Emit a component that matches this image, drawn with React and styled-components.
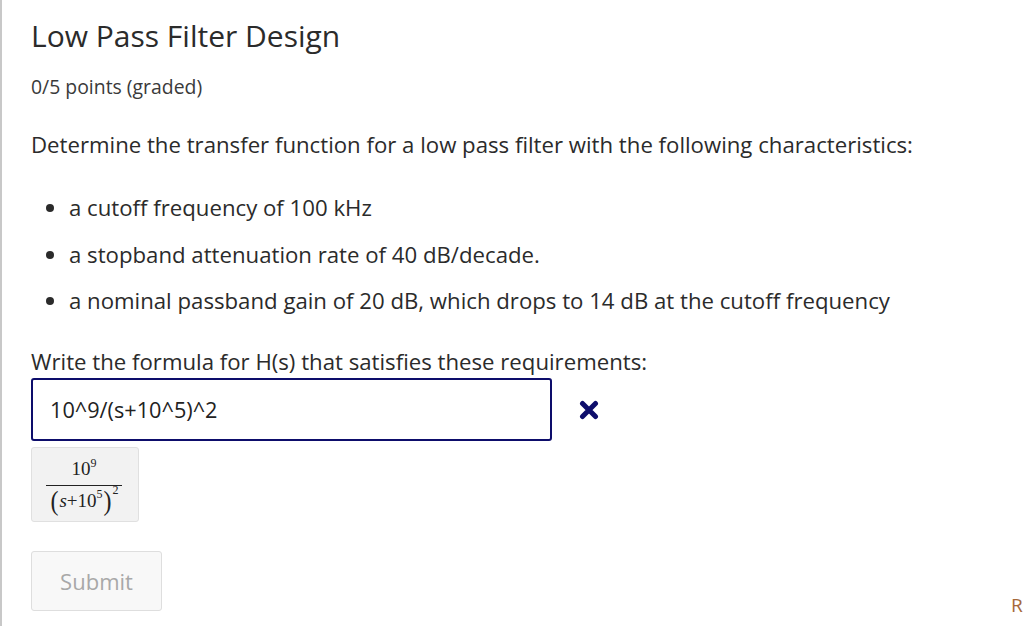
import React from "react";
import styled, { createGlobalStyle } from "styled-components";

const Global = createGlobalStyle`
  html, body { margin: 0; padding: 0; background: #fff; }
  body { font-family: "Open Sans", "Noto Sans", sans-serif; color: #2b2b2b; overflow: hidden; }
`;

const Page = styled.div`
  width: 1024px;
  height: 626px;
  position: relative;
  overflow: hidden;
  box-sizing: border-box;
  border-left: 2px solid #c8c8c8;
  padding: 13px 0 0 29px;
`;

const Title = styled.h2`
  margin: 0;
  font-size: 30px;
  font-weight: 400;
  line-height: 46px;
  color: #2b2b2b;
`;

const Points = styled.div`
  margin-top: 17px;
  font-size: 19.4px;
  line-height: 22px;
  color: #3a3a3a;
`;

const Para = styled.p`
  margin: ${(p) => p.$top || 0}px 0 0;
  font-size: 22.2px;
  line-height: 28px;
  color: #2b2b2b;
`;

const List = styled.ul`
  margin: 35px 0 0;
  padding: 0 0 0 38px;
  display: flex;
  flex-direction: column;
  gap: 18.5px;
  font-size: 22.2px;
  line-height: 28px;
`;

const Item = styled.li`
  padding-left: 0;
`;

const AnswerRow = styled.div`
  display: flex;
  align-items: center;
  margin-top: 2px;
`;

const Input = styled.div`
  width: 521px;
  height: 63px;
  box-sizing: border-box;
  border: 2px solid #0d0d6b;
  border-radius: 3px;
  padding: 0 17px;
  display: flex;
  align-items: center;
  font-size: 21.7px;
  color: #222;
`;

const Cross = styled.span`
  margin-left: 27px;
  margin-top: 1px;
  display: flex;
`;

const Preview = styled.div`
  margin-top: 6px;
  width: 108px;
  height: 75px;
  box-sizing: border-box;
  background: #f2f2f2;
  border: 1px solid #e0e0e0;
  border-radius: 3px;
  display: flex;
  align-items: center;
  justify-content: center;
  font-family: "Liberation Serif", "DejaVu Serif", serif;
  color: #222;
`;

const Frac = styled.div`
  display: flex;
  flex-direction: column;
  align-items: center;
  margin-right: 2px;
`;

const Num = styled.div`
  font-size: 19px;
  line-height: 21px;
  padding: 0 4px 3px;
`;

const Den = styled.div`
  font-size: 19px;
  line-height: 22px;
  border-top: 1px solid #222;
  padding: 4px 3px 0;
  display: flex;
  align-items: center;
`;

const Paren = styled.span`
  font-size: 24px;
  line-height: 22px;
  transform: scaleY(1.15);
  display: inline-block;
  margin: 0 1px;
`;

const Sup = styled.sup`
  font-size: 12px;
  vertical-align: 0;
  position: relative;
  top: ${(p) => p.$top || -7}px;
`;

const Var = styled.i``;

const Submit = styled.button`
  margin-top: 29px;
  width: 131px;
  height: 60px;
  background: #f8f8f8;
  border: 1px solid #dedede;
  border-radius: 3px;
  font-family: "Open Sans", "Noto Sans", sans-serif;
  font-size: 22px;
  color: #a8a8a8;
`;

const Corner = styled.span`
  position: absolute;
  left: 1009px;
  top: 592px;
  font-size: 19px;
  color: #a5683a;
`;

export default function App() {
  return (
    <>
      <Global />
      <Page>
        <Title>Low Pass Filter Design</Title>
        <Points>0/5 points (graded)</Points>
        <Para $top={33}>
          Determine the transfer function for a low pass filter with the following characteristics:
        </Para>
        <List>
          <Item>a cutoff frequency of 100 kHz</Item>
          <Item>a stopband attenuation rate of 40 dB/decade.</Item>
          <Item>a nominal passband gain of 20 dB, which drops to 14 dB at the cutoff frequency</Item>
        </List>
        <Para $top={33}>Write the formula for H(s) that satisfies these requirements:</Para>
        <AnswerRow>
          <Input>10^9/(s+10^5)^2</Input>
          <Cross>
            <svg width="20" height="20" viewBox="0 0 20 20">
              <path d="M3.5 3.5 L16.5 16.5 M16.5 3.5 L3.5 16.5" stroke="#0d0d6b" strokeWidth="5" strokeLinecap="round" />
            </svg>
          </Cross>
        </AnswerRow>
        <Preview>
          <Frac>
            <Num>
              10<Sup $top={-8}>9</Sup>
            </Num>
            <Den>
              <Paren>(</Paren>
              <Var>s</Var>+10<Sup $top={-7}>5</Sup>
              <Paren>)</Paren>
              <Sup $top={-11}>2</Sup>
            </Den>
          </Frac>
        </Preview>
        <Submit>Submit</Submit>
        <Corner>R</Corner>
      </Page>
    </>
  );
}
